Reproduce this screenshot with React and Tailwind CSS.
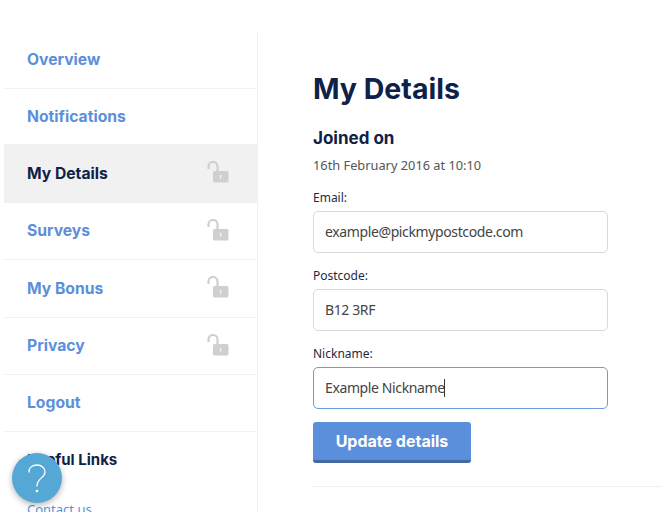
const head = { fontFamily: '"Inter", "Liberation Sans", sans-serif' };
const body = { fontFamily: '"Noto Sans", "Open Sans", sans-serif' };

function Lock() {
  return (
    <svg width="22" height="22" viewBox="0 0 22 22" className="shrink-0 -mt-[3px]">
      <path d="M1.5 8 V5.5 A4.5 4.5 0 0 1 10.5 5.5 V11" fill="none" stroke="#cfcfcf" strokeWidth="2.2" />
      <rect x="6" y="10" width="15.5" height="11.5" rx="1.5" fill="#cfcfcf" />
      <rect x="13.2" y="15" width="1" height="3" fill="#f4f4f4" />
      <circle cx="13.7" cy="15" r="1" fill="#f4f4f4" />
    </svg>
  );
}

function NavItem({ label, lock, active, h, last }) {
  return (
    <div
      className={`flex items-center justify-between pl-[23px] pr-[28px] text-[15.7px] font-bold ${active ? "bg-[#f1f1f1] text-[#0f2147]" : "text-[#5b8fdc]"} ${last || active ? "" : "border-b border-[#f1f1f1]"}`}
      style={{ ...head, height: h }}
    >
      <span className={active ? "pt-[1px]" : ""}>{label}</span>
      {lock && <Lock />}
    </div>
  );
}

function Field({ label, value, focus, caret }) {
  return (
    <div className="flex flex-col">
      <label className="text-[12px] leading-[16px] text-[#1d2b45] mb-[5px]">{label}</label>
      <div
        className={`w-[295px] h-[42px] rounded-[5px] bg-white flex items-center px-[11px] pb-[1px] text-[14px] tracking-[-0.38px] text-[#444444] border ${focus ? "border-[#6d9be0]" : "border-[#d9d9d9]"}`}
      >
        <span>{value}</span>
        {caret && <span className="w-px h-[18px] bg-[#333333] -ml-px" />}
      </div>
    </div>
  );
}

export default function App() {
  return (
    <div className="w-[668px] h-[518px] bg-white overflow-hidden" style={body}>
      <div className="relative w-[662px] h-[512px] overflow-hidden flex pl-[4px] pt-[32px]">
        <aside className="w-[254px] shrink-0 border-r border-[#f1f1f1] h-[480px] overflow-hidden">
          <NavItem label="Overview" h={57} />
          <NavItem label="Notifications" h={55} last />
          <NavItem label="My Details" lock active h={59} />
          <NavItem label="Surveys" lock h={57} />
          <NavItem label="My Bonus" lock h={58} />
          <NavItem label="Privacy" lock h={57} />
          <NavItem label="Logout" h={57} />
          <div className="pl-[23px] pt-[19px]">
            <div className="text-[15px] leading-[18px] font-bold text-[#0f2147]" style={head}>Useful Links</div>
            <div className="mt-[31px] text-[13px] leading-[18px] text-[#5b8fdc]">Contact us</div>
          </div>
        </aside>
        <main className="flex-1 pl-[55px] pt-[39px]">
          <h1 className="text-[28.5px] leading-[36px] font-bold text-[#0f2147]" style={head}>My Details</h1>
          <h2 className="mt-[21px] text-[17px] leading-[20px] font-bold text-[#0f2147]" style={head}>Joined on</h2>
          <p className="mt-[8px] text-[12.8px] leading-[18px] text-[#555555]">16th February 2016 at 10:10</p>
          <div className="mt-[16px] flex flex-col gap-[15px]">
            <Field label="Email:" value="example@pickmypostcode.com" />
            <Field label="Postcode:" value="B12 3RF" />
            <Field label="Nickname:" value="Example Nickname" focus caret />
          </div>
          <button
            className="mt-[13px] w-[158px] h-[41px] rounded-[3px] bg-[#5b8fdc] border-b-[3px] border-[#44699f] text-white text-[16px] font-bold"
            style={head}
          >
            Update details
          </button>
          <div className="mt-[23px] h-px bg-[#f1f1f1]" />
        </main>
        <div className="absolute left-[12px] top-[453px] w-[50px] h-[50px] rounded-full bg-[#55a7d6] shadow-[0_2px_6px_rgba(0,0,0,0.3)] flex items-center justify-center">
          <svg width="18" height="29" viewBox="0 0 18 29" fill="none" stroke="#fff" strokeWidth="1.3" strokeLinecap="round">
            <path d="M1 8 C1 3.5 4.5 1 9 1 C13.5 1 17 4 17 8 C17 14 9 14 9 22" />
            <circle cx="9" cy="27" r="0.7" fill="#fff" />
          </svg>
        </div>
      </div>
    </div>
  );
}
